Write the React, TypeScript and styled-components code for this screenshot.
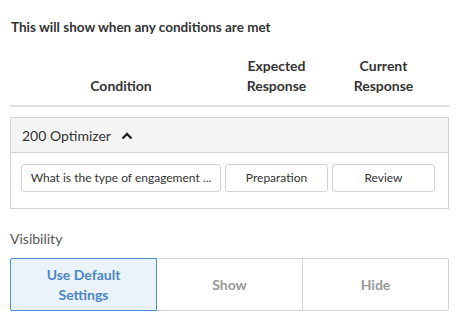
import React from "react";
import styled, { createGlobalStyle } from "styled-components";

const Global = createGlobalStyle`
  body { margin: 0; font-family: Lato, "Open Sans", sans-serif; color: #333; background: #fff; }
  * { box-sizing: border-box; }
`;

const Page = styled.div`
  width: 464px;
  padding: 19px 15px 10px 10px;
`;

const Title = styled.div`
  font-size: 13.5px;
  font-weight: 700;
  line-height: 16px;
  padding-left: 1px;
  color: #333;
`;

const HeaderRow = styled.div`
  margin-top: 21px;
  display: grid;
  grid-template-columns: 200px 103px 103px;
  column-gap: 4px;
  padding: 0 0 9px 11px;
  border-bottom: 2px solid #ddd;
  align-items: end;
`;

const HeadCell = styled.div`
  font-size: 14px;
  font-weight: 700;
  line-height: 20px;
  text-align: center;
  color: #333;
`;

const Panel = styled.div`
  margin-top: 10px;
  border: 1px solid #d2d2d2;
`;

const PanelHeader = styled.div`
  display: flex;
  align-items: center;
  gap: 10px;
  height: 35px;
  padding: 0 11px;
  background: #f5f5f5;
  border-bottom: 1px solid #d2d2d2;
  font-size: 14px;
  color: #333;
`;

const PanelBody = styled.div`
  display: grid;
  grid-template-columns: 200px 103px 103px;
  column-gap: 4px;
  padding: 11px 10px 16px 10px;
`;

const Cell = styled.div`
  height: 28px;
  border: 1px solid #d2d2d2;
  border-radius: 3px;
  font-size: 12px;
  line-height: 26px;
  text-align: center;
  padding: 0 8px;
  white-space: nowrap;
  overflow: hidden;
  color: #333;
`;

const Label = styled.div`
  margin-top: 21px;
  font-size: 14px;
  line-height: 18px;
  color: #555;
`;

const Segments = styled.div`
  margin-top: 10px;
  display: grid;
  grid-template-columns: 147px 146px 146px;
  height: 53px;
`;

const Segment = styled.div<{ $active?: boolean; $first?: boolean }>`
  display: flex;
  align-items: center;
  justify-content: center;
  text-align: center;
  padding: 0 24px;
  font-size: 14px;
  font-weight: 700;
  line-height: 20px;
  color: ${(p) => (p.$active ? "#4a86c8" : "#999")};
  background: ${(p) => (p.$active ? "#eaf2fb" : "#fff")};
  border: 1px solid ${(p) => (p.$active ? "#4a8fd6" : "#d2d2d2")};
  border-left-width: ${(p) => (p.$first ? "1px" : "0")};
  border-radius: ${(p) => (p.$first ? "2px 0 0 2px" : "0")};
  &:last-child { border-radius: 0 2px 2px 0; }
`;

const Chevron = () => (
  <svg width="12" height="8" viewBox="0 0 12 8" style={{ marginTop: 1 }}>
    <polyline points="1.5,6.5 6,2 10.5,6.5" fill="none" stroke="#222" strokeWidth="2.4" />
  </svg>
);

export default function App() {
  return (
    <Page>
      <Global />
      <Title>This will show when any conditions are met</Title>
      <HeaderRow>
        <HeadCell>Condition</HeadCell>
        <HeadCell>Expected<br />Response</HeadCell>
        <HeadCell>Current<br />Response</HeadCell>
      </HeaderRow>
      <Panel>
        <PanelHeader>
          200 Optimizer <Chevron />
        </PanelHeader>
        <PanelBody>
          <Cell>What is the type of engagement ...</Cell>
          <Cell>Preparation</Cell>
          <Cell>Review</Cell>
        </PanelBody>
      </Panel>
      <Label>Visibility</Label>
      <Segments>
        <Segment $active $first>Use Default Settings</Segment>
        <Segment>Show</Segment>
        <Segment>Hide</Segment>
      </Segments>
    </Page>
  );
}
